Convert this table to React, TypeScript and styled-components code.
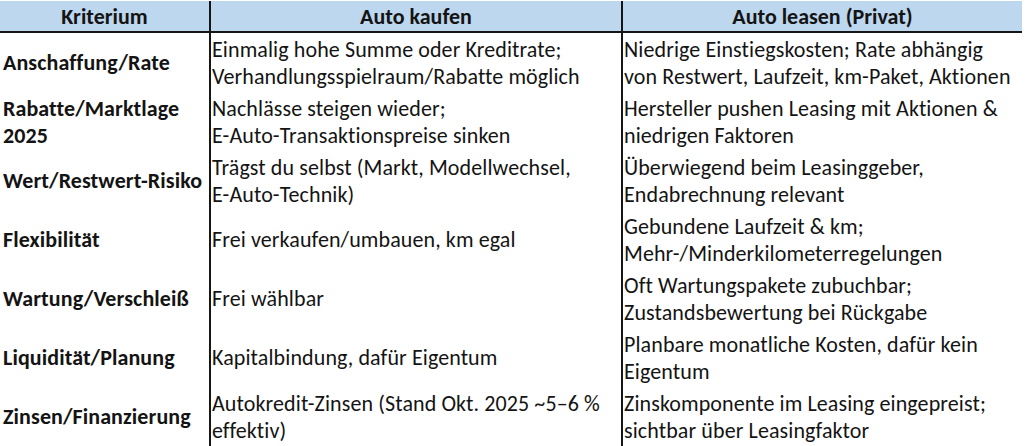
import React from "react";
import styled, { createGlobalStyle } from "styled-components";

type Row = { label: string[]; buy: string[]; lease: string[] };

const rows: Row[] = [
  {
    label: ["Anschaffung/Rate"],
    buy: ["Einmalig hohe Summe oder Kreditrate;", "Verhandlungsspielraum/Rabatte möglich"],
    lease: ["Niedrige Einstiegskosten; Rate abhängig", "von Restwert, Laufzeit, km-Paket, Aktionen"],
  },
  {
    label: ["Rabatte/Marktlage", "2025"],
    buy: ["Nachlässe steigen wieder;", "E-Auto-Transaktionspreise sinken"],
    lease: ["Hersteller pushen Leasing mit Aktionen &", "niedrigen Faktoren"],
  },
  {
    label: ["Wert/Restwert-Risiko"],
    buy: ["Trägst du selbst (Markt, Modellwechsel,", "E-Auto-Technik)"],
    lease: ["Überwiegend beim Leasinggeber,", "Endabrechnung relevant"],
  },
  {
    label: ["Flexibilität"],
    buy: ["Frei verkaufen/umbauen, km egal"],
    lease: ["Gebundene Laufzeit & km;", "Mehr-/Minderkilometerregelungen"],
  },
  {
    label: ["Wartung/Verschleiß"],
    buy: ["Frei wählbar"],
    lease: ["Oft Wartungspakete zubuchbar;", "Zustandsbewertung bei Rückgabe"],
  },
  {
    label: ["Liquidität/Planung"],
    buy: ["Kapitalbindung, dafür Eigentum"],
    lease: ["Planbare monatliche Kosten, dafür kein", "Eigentum"],
  },
  {
    label: ["Zinsen/Finanzierung"],
    buy: ["Autokredit-Zinsen (Stand Okt. 2025 ~5–6 %", "effektiv)"],
    lease: ["Zinskomponente im Leasing eingepreist;", "sichtbar über Leasingfaktor"],
  },
];

const GlobalStyle = createGlobalStyle`
  body {
    margin: 0;
    background: #ffffff;
    font-family: Calibri, Carlito, Lato, "Liberation Sans", sans-serif;
    color: #141414;
  }
`;

const Table = styled.div`
  display: grid;
  grid-template-columns: 209px 412px 401px;
  width: 1022px;
  padding-top: 1px;
`;

const HeadCell = styled.div<{ $first?: boolean }>`
  height: 30px;
  display: flex;
  align-items: center;
  justify-content: center;
  background: #bdd7ee;
  border-bottom: 2px solid #161616;
  border-left: ${(p) => (p.$first ? "none" : "2px solid #161616")};
  font-size: 22px;
  line-height: 27px;
  font-weight: 700;
`;

const Cell = styled.div<{ $bold?: boolean; $first?: boolean }>`
  height: 59px;
  display: flex;
  flex-direction: column;
  justify-content: center;
  border-left: ${(p) => (p.$first ? "none" : "2px solid #161616")};
  padding-left: ${(p) => (p.$first ? "3px" : "1px")};
  font-size: 22px;
  line-height: 27px;
  letter-spacing: 0.1px;
  font-weight: ${(p) => (p.$bold ? 700 : 400)};
  white-space: nowrap;
  overflow: hidden;
`;

const Lines: React.FC<{ lines: string[] }> = ({ lines }) => (
  <>
    {lines.map((l) => (
      <span key={l}>{l}</span>
    ))}
  </>
);

export default function App() {
  return (
    <>
      <GlobalStyle />
      <Table>
        <HeadCell $first>Kriterium</HeadCell>
        <HeadCell>Auto kaufen</HeadCell>
        <HeadCell>Auto leasen (Privat)</HeadCell>
        {rows.map((r) => (
          <React.Fragment key={r.label[0]}>
            <Cell $first $bold>
              <Lines lines={r.label} />
            </Cell>
            <Cell>
              <Lines lines={r.buy} />
            </Cell>
            <Cell>
              <Lines lines={r.lease} />
            </Cell>
          </React.Fragment>
        ))}
      </Table>
    </>
  );
}
